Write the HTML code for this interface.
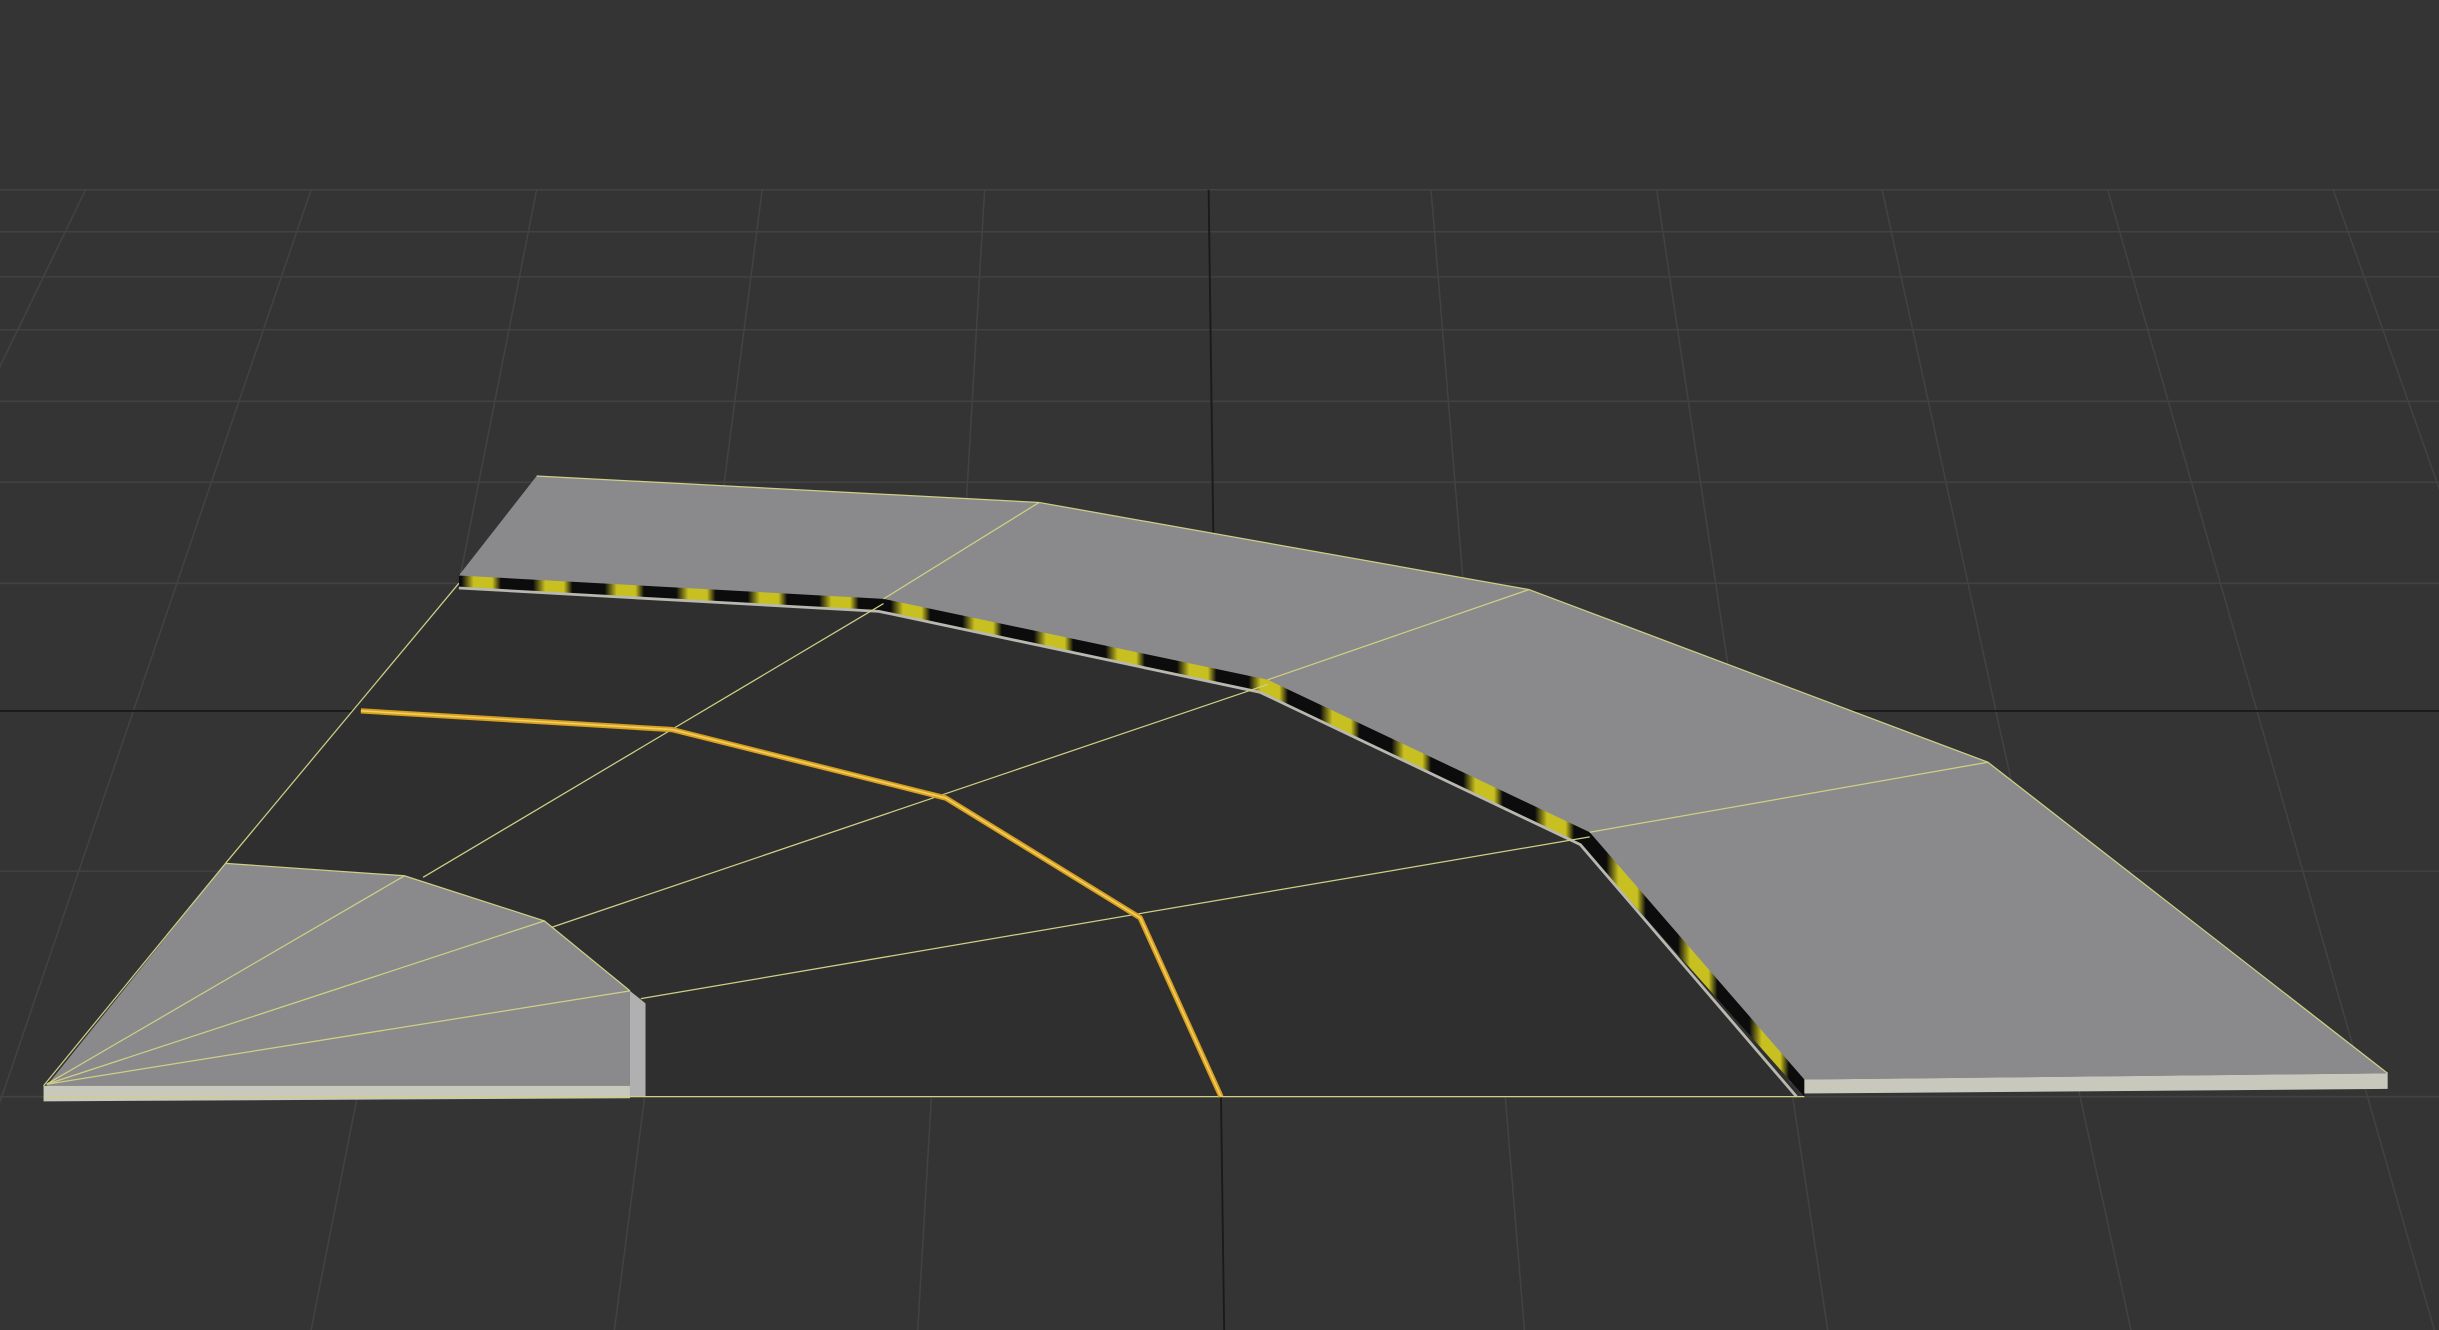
<!DOCTYPE html>
<html><head><style>html,body{margin:0;padding:0;background:#343434;overflow:hidden}svg{display:block}</style></head>
<body>
<svg width="2439" height="1330" viewBox="0 0 1568 855" preserveAspectRatio="none" xmlns="http://www.w3.org/2000/svg">
<defs>
<linearGradient id="stripe" x1="0" y1="0" x2="46" y2="0" gradientUnits="userSpaceOnUse" spreadMethod="repeat">
<stop offset="0" stop-color="#0c0c0c"/><stop offset="0.45" stop-color="#0c0c0c"/><stop offset="0.62" stop-color="#c8c020"/><stop offset="0.88" stop-color="#c8c020"/><stop offset="1" stop-color="#0c0c0c"/>
</linearGradient>
</defs>
<rect width="1568" height="855" fill="#343434"/>
<g stroke="#424242" stroke-width="1" fill="none">
<line x1="0" y1="122" x2="1568" y2="122"/>
<line x1="0" y1="149" x2="1568" y2="149"/>
<line x1="0" y1="178" x2="1568" y2="178"/>
<line x1="0" y1="212" x2="1568" y2="212"/>
<line x1="0" y1="258" x2="1568" y2="258"/>
<line x1="0" y1="310" x2="1568" y2="310"/>
<line x1="0" y1="375" x2="1568" y2="375"/>
<line x1="0" y1="560" x2="1568" y2="560"/>
<line x1="0" y1="705" x2="1568" y2="705"/>
<line x1="55" y1="122" x2="-300" y2="855"/>
<line x1="200" y1="122" x2="-50" y2="855"/>
<line x1="345" y1="122" x2="200" y2="855"/>
<line x1="490" y1="122" x2="395" y2="855"/>
<line x1="633" y1="122" x2="590" y2="855"/>
<line x1="920" y1="122" x2="980" y2="855"/>
<line x1="1065" y1="122" x2="1175" y2="855"/>
<line x1="1210" y1="122" x2="1370" y2="855"/>
<line x1="1355" y1="122" x2="1565" y2="855"/>
<line x1="1500" y1="122" x2="1760" y2="855"/>
</g>
<line x1="0" y1="457" x2="1568" y2="457" stroke="#1a1a1a" stroke-width="1.2"/>
<line x1="777" y1="122" x2="787" y2="855" stroke="#1a1a1a" stroke-width="1.2"/>
<!-- asphalt -->
<polygon points="295,375 568,390 815,443 1022,540 1158,705 412,705 405,637 350,592 260,563 145,555" fill="#2f2f2f"/>
<!-- curb faces -->
<polygon points="295,369 568,384 815,436 1022,534 1160,693 1160,705 1016,543 810,445 565,393 295,378" fill="url(#stripe)"/>
<polyline points="295,378 565,393 810,445 1016,543 1155,705" fill="none" stroke="#b8b8b0" stroke-width="1.8"/>
<!-- top sidewalk -->
<polygon points="345,306 668,323 983,379 1278,490 1535,690 1160,694 1022,535 815,437 568,385 295,370" fill="#8a8a8c"/>
<polygon points="1160,694 1535,690 1535,700 1160,703" fill="#c8c8bc"/>
<!-- left corner -->
<polygon points="145,555 260,563 350,592 405,637 405,698 30,698" fill="#8a8a8c"/>
<polygon points="405,637 415,645 415,705 405,705" fill="#b0b0b0"/>
<polygon points="28,698 405,698 405,706 28,708" fill="#c8c8bc"/>
<!-- wire lines -->
<g stroke="#cfcf86" stroke-width="0.8" fill="none">
<polyline points="345,306 668,323 983,379 1278,490 1535,690"/>
<line x1="568" y1="385" x2="668" y2="323"/>
<line x1="815" y1="437" x2="983" y2="379"/>
<line x1="1022" y1="535" x2="1278" y2="490"/>
<line x1="568" y1="388" x2="272" y2="564"/>
<line x1="815" y1="440" x2="355" y2="596"/>
<line x1="1022" y1="538" x2="412" y2="642"/>
<line x1="295" y1="375" x2="145" y2="555"/>
<line x1="30" y1="697" x2="260" y2="563"/>
<line x1="30" y1="697" x2="350" y2="592"/>
<line x1="30" y1="697" x2="405" y2="637"/>
<polyline points="145,555 260,563 350,592 405,637"/>
<line x1="28" y1="705" x2="1160" y2="705"/>
<line x1="145" y1="555" x2="28" y2="698"/>
</g>
<!-- center yellow line -->
<polyline points="232,457 432,469 608,513 733,590 785,705" fill="none" stroke="#d8a020" stroke-width="3.4" stroke-linejoin="round"/>
<polyline points="232,457 432,469 608,513 733,590 785,705" fill="none" stroke="#f4d060" stroke-width="1"/>
</svg>
</body></html>
